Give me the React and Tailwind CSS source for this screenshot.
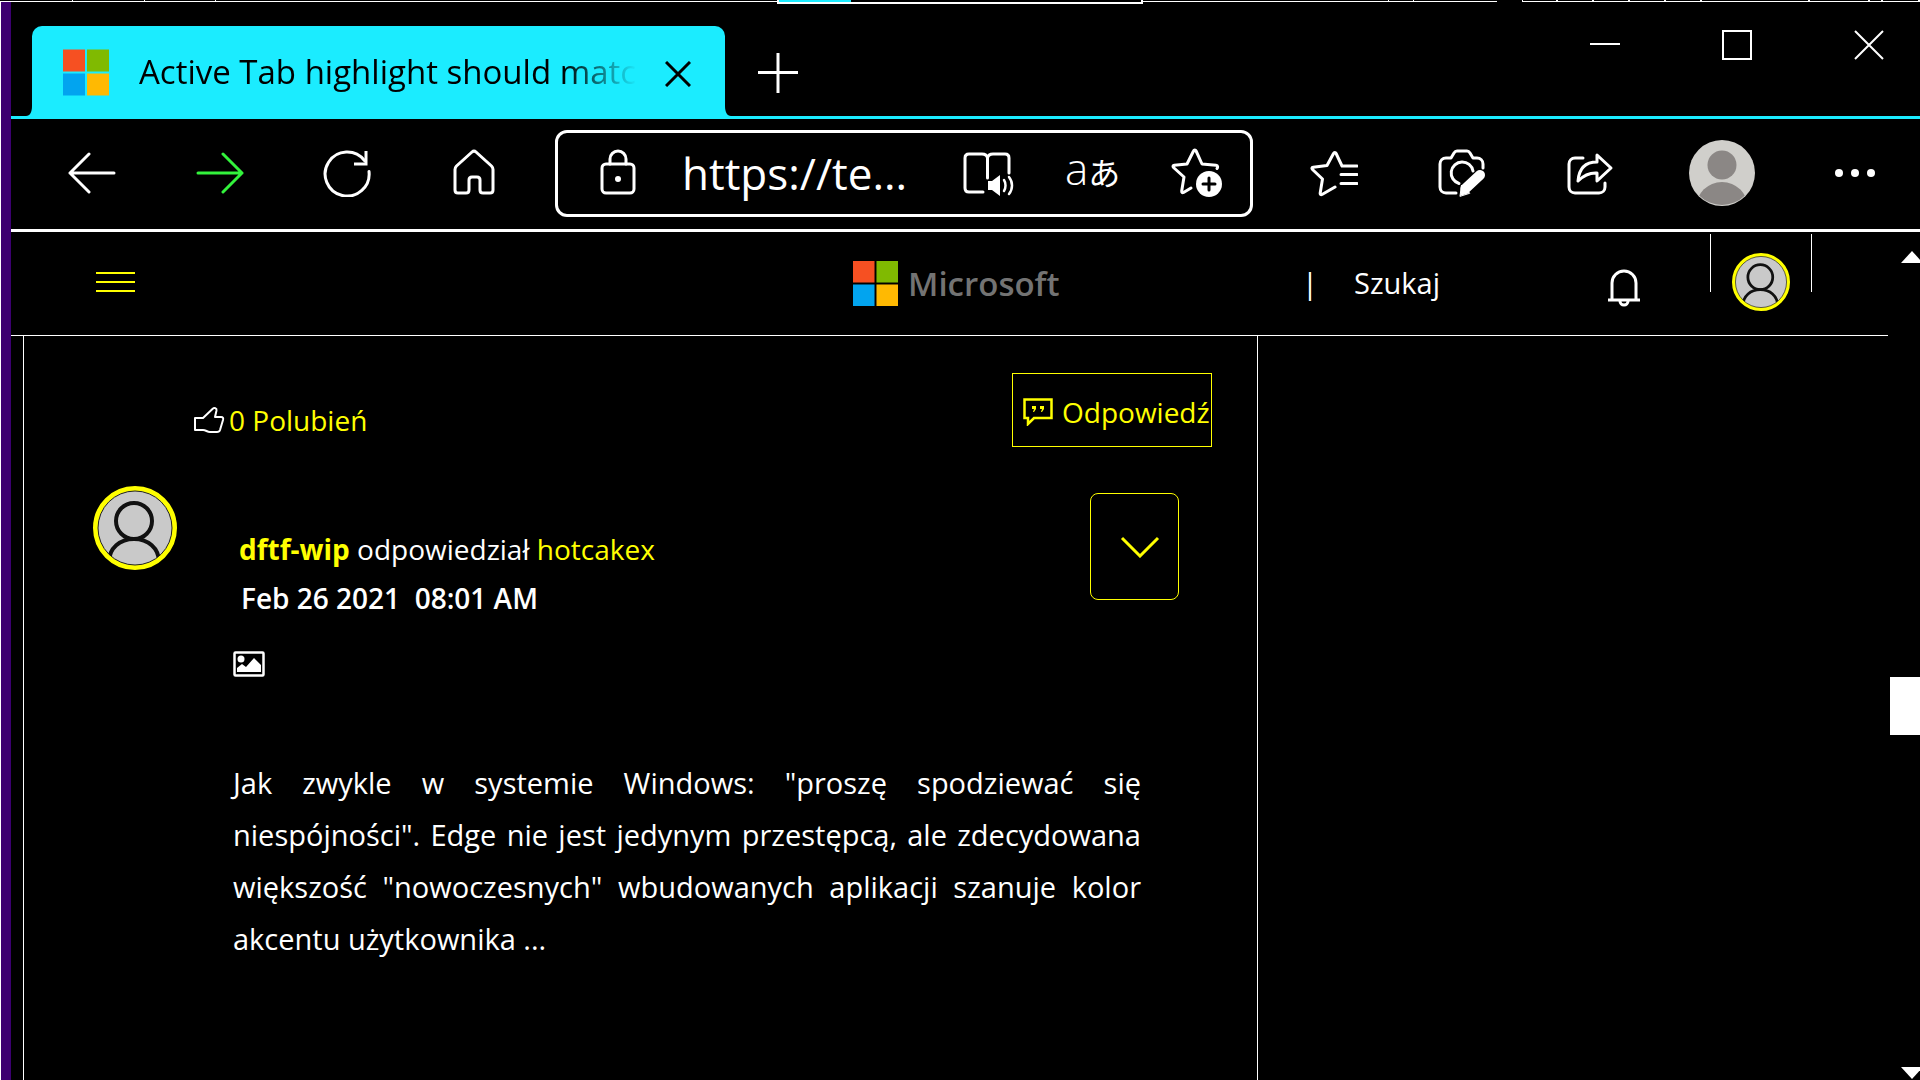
import React from 'react';

const stroke = {
  fill: 'none',
  stroke: 'currentColor',
  strokeWidth: 3,
  strokeLinecap: 'round',
  strokeLinejoin: 'round',
};

const MicrosoftMark = ({ className }) => (
  <svg viewBox="0 0 46 46" className={className} aria-hidden="true">
    <path d="M0 0h22v22H0z" fill="#f65022" />
    <path d="M24 0h22v22H24z" fill="#80ba01" />
    <path d="M0 24h22v22H0z" fill="#02a4ef" />
    <path d="M24 24h22v22H24z" fill="#ffb902" />
  </svg>
);

const BackIcon = () => (
  <svg width="48" height="48" viewBox="0 0 48 48" {...stroke}>
    <path d="M46 24H2M21 5L2 24l19 19" />
  </svg>
);

const ForwardIcon = () => (
  <svg width="48" height="48" viewBox="0 0 48 48" {...stroke}>
    <path d="M2 24h44M27 5l19 19-19 19" />
  </svg>
);

const ReloadIcon = () => (
  <svg width="48" height="48" viewBox="0 0 48 48" {...stroke}>
    <path d="M46 22.5A22 22 0 1 1 41.500 11.500" />
    <path d="M43 2v13H31" strokeLinecap="butt" strokeLinejoin="miter" />
  </svg>
);

const HomeIcon = () => (
  <svg width="48" height="48" viewBox="0 0 48 48" {...stroke}>
    <path d="M5 20.500c0-1.500.5-2.500 1.500-3.500L22 3c1.200-1.100 2.800-1.100 4 0l15.500 14c1 1 1.500 2 1.500 3.500V41c0 2-1 3-3 3h-7c-2 0-3-1-3-3V31c0-2-1-3-3-3h-5c-2 0-3 1-3 3v10c0 2-1 3-3 3H8c-2 0-3-1-3-3z" />
  </svg>
);

const LockIcon = () => (
  <svg width="40" height="48" viewBox="0 0 40 48" {...stroke}>
    <rect x="4" y="15" width="32" height="29" rx="4" />
    <path d="M12 15V10a8 8 0 0 1 16 0v5" />
    <circle cx="20" cy="30" r="3" fill="currentColor" stroke="none" />
  </svg>
);

const ReaderIcon = () => (
  <svg width="52" height="48" viewBox="0 0 52 48" {...stroke}>
    <path d="M20 43H6c-2.500 0-4-1.500-4-4V9c0-2.500 1.500-4 4-4h13c3 0 5 1.500 5.500 4C25 6.500 27 5 30 5h12c2.500 0 4 1.500 4 4v15" />
    <path d="M24.500 9v20" />
    <path d="M25 32h4l8-6v21l-8-6h-4z" fill="currentColor" stroke="none" />
    <path d="M41 31c2 3 2 8 0 11M46 28c4 5 4 12 0 17" strokeWidth="2.500" />
  </svg>
);

const AddFavoriteIcon = () => (
  <svg width="52" height="52" viewBox="0 0 52 52" {...stroke}>
    <path d="M20 41l-7.500 4.500c-1 .5-2 0-1.800-1.500L13 30 2.500 20.500c-1-1-.5-2 .8-2.200L16 17l6.500-13c.6-1.300 2-1.300 2.600 0L31 17l14 1.300c2 .2 2 2 1 3.200" />
    <circle cx="38" cy="37" r="13" fill="currentColor" stroke="none" />
    <path d="M38 31v12M32 37h12" stroke="#000" />
  </svg>
);

const FavoritesIcon = () => (
  <svg width="48" height="48" viewBox="0 0 48 48" {...stroke}>
    <path d="M25 38l-13 7.500c-1 .5-2 0-1.800-1.500L12.500 30 2.500 20.500c-1-1-.8-2 .7-2.200L17 16.500l6.500-12c.6-1.300 2-1.300 2.600 0L32 17h15" />
    <path d="M31 25.500h16M31 34.500h16" />
  </svg>
);

const CaptureIcon = () => (
  <svg width="48" height="48" viewBox="0 0 48 48" {...stroke}>
    <path d="M18 44H8c-3.500 0-6-2.500-6-6V15c0-3.500 2.500-6 6-6h5l3-5c.8-1.300 1.600-2 3-2h10c1.400 0 2.200.7 3 2l3 5h4c3.500 0 6 2.500 6 6v4" />
    <path d="M21 34.500A11 11 0 1 1 35 22" />
    <path d="M27.500 39.500L42 26" strokeWidth="10" />
    <path d="M22 47l1.500-11 8 8z" fill="currentColor" strokeWidth="1" />
  </svg>
);

const ShareIcon = () => (
  <svg width="48" height="48" viewBox="0 0 48 48" {...stroke}>
    <path d="M17 9H9c-3.500 0-6 2.500-6 6v23c0 3.500 2.500 6 6 6h24c3.500 0 6-2.500 6-6v-4" />
    <path d="M31 6l14 13-14 13v-8c-8-.5-13 2-19 8 1-13 7-19 19-19z" />
  </svg>
);

const ProfileIcon = () => (
  <svg width="66" height="66" viewBox="0 0 66 66">
    <clipPath id="profile-clip">
      <circle cx="33" cy="33" r="32" />
    </clipPath>
    <circle cx="33" cy="33" r="33" fill="#d0cfcb" />
    <g clipPath="url(#profile-clip)" fill="#8b8785">
      <circle cx="33" cy="25" r="14.500" />
      <circle cx="33" cy="68" r="26" />
    </g>
  </svg>
);

const PersonAvatar = ({ id, className }) => (
  <svg viewBox="0 0 84 84" className={className} aria-hidden="true">
    <clipPath id={id}>
      <circle cx="42" cy="42" r="37" />
    </clipPath>
    <circle cx="42" cy="42" r="39.500" fill="#c9c9c9" stroke="#ffff00" strokeWidth="5" />
    <circle cx="42" cy="42" r="37" fill="none" stroke="#222" strokeWidth="1" />
    <g clipPath={`url(#${id})`} fill="none" stroke="#111" strokeWidth="4">
      <circle cx="41" cy="35" r="18" />
      <path d="M16 76c0-14 11-23 25-23s25 9 25 23" />
    </g>
  </svg>
);

const BellIcon = () => (
  <svg width="34" height="40" viewBox="0 0 34 40" fill="none" stroke="currentColor" strokeWidth="3">
    <path d="M1 32h32M5 32V15a12 12 0 0 1 24 0v17" />
    <path d="M13 33a4 4 0 0 0 8 0" />
  </svg>
);

const ThumbIcon = () => (
  <svg width="32" height="28" viewBox="0 0 32 28" fill="none" stroke="currentColor" strokeWidth="2" strokeLinejoin="round">
    <path d="M2 12h8L20 2.500c1-1 4-.5 3.500 2L22 11h6c2 0 2.500 1 2 3l-3 10c-.5 1.500-1.500 2-3 2h-7c-3 0-4-2-7-2H2z" />
  </svg>
);

const PictureIcon = () => (
  <svg width="32" height="26" viewBox="0 0 32 26">
    <rect x="1.500" y="1.500" width="29" height="23" rx="1" fill="none" stroke="currentColor" strokeWidth="2.500" />
    <circle cx="8" cy="8" r="3.500" fill="currentColor" />
    <path d="M4 21v-4l5-4 4 3 8-9 7 7v7z" fill="currentColor" />
  </svg>
);

const QuoteIcon = () => (
  <svg width="30" height="28" viewBox="0 0 30 28" fill="none" stroke="currentColor" strokeWidth="2.500">
    <path d="M1.500 1.500h27v18.500H11l-6 6v-6H1.500z" />
    <path d="M9 8h4v3l-2 3h-1l1-3H9zM17 8h4v3l-2 3h-1l1-3h-2z" fill="currentColor" stroke="none" />
  </svg>
);

const ToolButton = ({ label, className = 'w-32', children }) => (
  <button type="button" aria-label={label} className={`flex h-16 shrink-0 items-center justify-center ${className}`}>
    {children}
  </button>
);

// widths of the cells whose bottom edge shows above the window
const leftCells = [73, 72, 71, 561];
const middleCells = [246, 25, 83];
const rightCells = [35, 36, 36, 36, 36, 108, 60, 13, 37];

const DesktopEdge = () => (
  <div className="flex h-0.5 overflow-x-clip">
    {leftCells.map((w, i) => (
      <div key={i} className={`border-b border-white ${i < 3 ? 'border-r' : ''}`} style={{ width: w }} />
    ))}
    <div className="relative z-10 h-1 w-[366px] shrink-0 border-x-2 border-b-2 border-white bg-black">
      <div className="h-0.5 w-[72px] bg-[#1becff]" />
    </div>
    {middleCells.map((w, i) => (
      <div key={i} className={`border-b border-white ${i < 2 ? 'border-r' : ''}`} style={{ width: w }} />
    ))}
    <div className="flex-1 border-r border-white" />
    {rightCells.map((w, i) => (
      <div key={i} className="border-r-2 border-b border-white" style={{ width: w }} />
    ))}
  </div>
);

const TabStrip = () => (
  <div className="flex h-[117px] border-b-[3px] border-[#1becff] pl-[15px]">
    <div className="flex items-end">
      <svg width="6" height="10" viewBox="0 0 6 10" fill="#1becff">
        <path d="M6 0v10H0c4 0 6-4 6-10z" />
      </svg>
      <div className="flex h-[90px] w-[693px] items-center rounded-t-[10px] bg-[#1becff] pt-0.5 pl-[31px] text-black">
        <MicrosoftMark className="h-[47px] w-[46px] shrink-0" />
        <span className="ml-[30px] w-[498px] overflow-hidden text-[33px] whitespace-nowrap mask-r-from-85% mask-r-to-100%">
          Active Tab highlight should matc
        </span>
        <button type="button" aria-label="Close tab" className="mt-1 ml-7">
          <svg width="26" height="26" viewBox="0 0 26 26" fill="none" stroke="currentColor" strokeWidth="3">
            <path d="M1 1l24 24M25 1L1 25" />
          </svg>
        </button>
      </div>
      <svg width="6" height="10" viewBox="0 0 6 10" fill="#1becff">
        <path d="M0 0v10h6C2 10 0 6 0 0z" />
      </svg>
    </div>
    <button type="button" aria-label="New tab" className="mt-[50px] ml-[26px] self-start">
      <svg width="42" height="42" viewBox="0 0 42 42" fill="none" stroke="currentColor" strokeWidth="3">
        <path d="M21 1v40M1 20.500h40" />
      </svg>
    </button>
    <div className="ml-auto flex items-start gap-[102px] pt-7 pr-9">
      <button type="button" aria-label="Minimize">
        <svg width="30" height="30" viewBox="0 0 30 30" stroke="currentColor" strokeWidth="2">
          <path d="M0 14h30" />
        </svg>
      </button>
      <button type="button" aria-label="Maximize">
        <svg width="30" height="30" viewBox="0 0 30 30" fill="none" stroke="currentColor" strokeWidth="2">
          <rect x="1" y="1" width="28" height="28" />
        </svg>
      </button>
      <button type="button" aria-label="Close">
        <svg width="30" height="30" viewBox="0 0 30 30" fill="none" stroke="currentColor" strokeWidth="2">
          <path d="M1 1l28 28M29 1L1 29" />
        </svg>
      </button>
    </div>
  </div>
);

const Toolbar = () => (
  <div className="flex h-[113px] items-center border-b-[3px] border-white pb-0.5 pl-[17px]">
    <ToolButton label="Back"><BackIcon /></ToolButton>
    <ToolButton label="Forward" className="w-32 text-[#33f33c]"><ForwardIcon /></ToolButton>
    <ToolButton label="Reload" className="w-[126px]"><ReloadIcon /></ToolButton>
    <ToolButton label="Home"><HomeIcon /></ToolButton>
    <div className="mr-[17px] ml-[17px] flex h-[87px] min-w-0 flex-1 items-center rounded-xl border-[3px] border-white pr-[27px] pl-10">
      <button type="button" aria-label="Site information"><LockIcon /></button>
      <input
        type="text"
        aria-label="Address"
        defaultValue="https://te..."
        className="ml-11 min-w-0 flex-1 bg-transparent text-[44px] leading-[60px] outline-none"
      />
      <div className="flex items-center gap-[50px]">
        <button type="button" aria-label="Read aloud"><ReaderIcon /></button>
        <button type="button" aria-label="Translate" className="-mt-2 flex w-[56px] items-baseline leading-[48px]">
          <span className="text-[44px] font-light">a</span>
          <span className="font-['Noto_Sans_CJK_JP',sans-serif] text-[32px]">あ</span>
        </button>
        <button type="button" aria-label="Add to favorites"><AddFavoriteIcon /></button>
      </div>
    </div>
    <ToolButton label="Favorites"><FavoritesIcon /></ToolButton>
    <ToolButton label="Web capture"><CaptureIcon /></ToolButton>
    <ToolButton label="Share"><ShareIcon /></ToolButton>
    <ToolButton label="Profile" className="w-[136px]"><ProfileIcon /></ToolButton>
    <ToolButton label="Settings and more" className="w-[130px]">
      <svg width="40" height="8" viewBox="0 0 40 8" fill="currentColor">
        <circle cx="4" cy="4" r="4" />
        <circle cx="20" cy="4" r="4" />
        <circle cx="36" cy="4" r="4" />
      </svg>
    </ToolButton>
  </div>
);

const SiteHeader = () => (
  <header className="grid h-[104px] grid-cols-[1fr_auto_1fr] items-center border-b border-white">
    <button type="button" aria-label="Menu" className="mb-1 ml-[85px] flex w-[39px] flex-col gap-[7px] justify-self-start">
      <span className="h-0.5 bg-[#ffff00]" />
      <span className="h-0.5 bg-[#ffff00]" />
      <span className="h-0.5 bg-[#ffff00]" />
    </button>
    <a href="#" className="flex items-center pl-4">
      <MicrosoftMark className="size-[45px]" />
      <span className="ml-[10px] w-[154px] text-[33px] leading-10 font-semibold text-[#737373]">Microsoft</span>
    </a>
    <div className="flex h-full items-center justify-end pr-[76px]">
      <button type="button" className="mr-[167px] flex gap-9 pb-0.5 text-[29px] leading-10">
        <span>|</span>
        <span>Szukaj</span>
      </button>
      <button type="button" aria-label="Notifications" className="mt-2 mr-[69px]"><BellIcon /></button>
      <button type="button" aria-label="Account" className="mt-0.5 flex h-[58px] w-[102px] justify-center self-start border-x border-white pt-[19px]">
        <PersonAvatar id="account-clip" className="size-[58px] shrink-0" />
      </button>
    </div>
  </header>
);

const Comment = () => (
  <article className="pt-[37px] pr-[45px] pl-[69px]">
    <div className="flex items-start justify-between">
      <button type="button" className="mt-[27px] ml-[100px] flex items-center gap-1 text-[28px] leading-10">
        <ThumbIcon />
        <span className="text-[#ffff00]">0 Polubień</span>
      </button>
      <button type="button" className="flex h-[74px] w-[200px] items-center gap-[9px] border border-[#ffff00] pt-1 pl-[10px] text-[28px] leading-10 text-[#ffff00]">
        <QuoteIcon />
        Odpowiedź
      </button>
    </div>

    <div className="mt-[39px] flex items-start">
      <PersonAvatar id="author-clip" className="size-[84px] shrink-0" />
      <div className="mt-[39px] ml-[62px] flex-1">
        <p className="text-[28px] leading-[49px]">
          <a href="#" className="font-bold text-[#ffff00]">dftf-wip</a> odpowiedział{' '}
          <a href="#" className="text-[#ffff00]">hotcakex</a>
        </p>
        <p className="pl-0.5 text-[28px] leading-[49px] font-semibold">Feb 26 2021&nbsp; 08:01 AM</p>
      </div>
      <button type="button" aria-label="Show options" className="mt-[7px] mr-[33px] flex h-[107px] w-[89px] items-center justify-center rounded-lg border border-[#ffff00] pl-[10px] text-[#ffff00]">
        <svg width="40" height="22" viewBox="0 0 40 22" fill="none" stroke="currentColor" strokeWidth="3">
          <path d="M2 2l18 18L38 2" />
        </svg>
      </button>
    </div>

    <div className="mt-7 mr-[71px] ml-[140px]">
      <PictureIcon />
      <p className="mt-20 text-justify text-[29px] leading-[52px]">
        Jak zwykle w systemie Windows: "proszę spodziewać się niespójności". Edge nie jest jedynym przestępcą, ale
        zdecydowana większość "nowoczesnych" wbudowanych aplikacji szanuje kolor akcentu użytkownika ...
      </p>
    </div>
  </article>
);

const Scrollbar = () => (
  <div className="flex w-[30px] shrink-0 flex-col overflow-hidden pt-[19px]">
    <svg width="22" height="12" viewBox="0 0 22 12" fill="currentColor" className="ml-[11px] shrink-0">
      <path d="M11 0l11 12H0z" />
    </svg>
    <div className="flex flex-1 flex-col">
      <div className="flex-[414]" />
      <div className="h-[58px] bg-white" />
      <div className="flex-[332]" />
    </div>
    <svg width="22" height="12" viewBox="0 0 22 12" fill="currentColor" className="mb-px ml-[11px] shrink-0">
      <path d="M0 0h22L11 12z" />
    </svg>
  </div>
);

const App = () => {
  return (
    <div className="flex min-h-screen flex-col overflow-x-hidden bg-black font-['Open_Sans','Noto_Sans',sans-serif] text-white">
      <DesktopEdge />
      <div className="flex flex-1">
        <div className="w-[11px] shrink-0 border-l border-white bg-[#3c0070]" />
        <div className="flex min-w-0 flex-1 flex-col">
          <TabStrip />
          <Toolbar />
          <div className="flex flex-1">
            <div className="mr-0.5 flex min-w-0 flex-1 flex-col">
              <SiteHeader />
              <div className="ml-3 grid flex-1 grid-cols-[1235fr_630fr]">
                <main className="border-x border-white">
                  <Comment />
                </main>
                <aside />
              </div>
            </div>
            <Scrollbar />
          </div>
        </div>
      </div>
    </div>
  );
};

export default App;
